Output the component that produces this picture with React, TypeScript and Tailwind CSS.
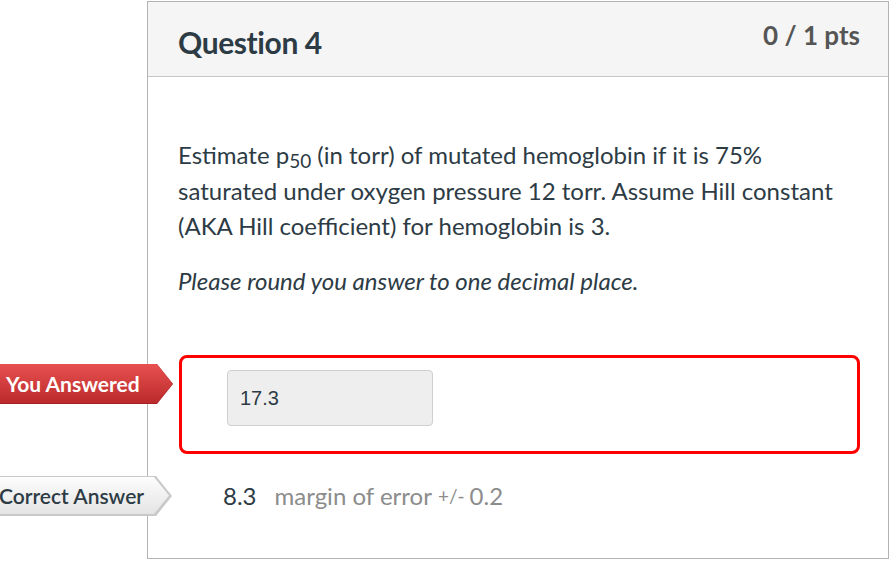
import React from "react"

const font = "font-['Lato','Noto_Sans',sans-serif]"

function AnswerFlag({ label, tone }: { label: string; tone: "wrong" | "right" }) {
  const shape = "[clip-path:polygon(0_0,157px_0,173px_50%,157px_100%,0_100%)]"
  if (tone === "wrong") {
    return (
      <div className={`relative h-10 w-[173px] ${shape} bg-[#a82026]`}>
        <div
          className={`absolute inset-x-0 top-0 bottom-px ${shape} bg-gradient-to-b from-[#e8504f] to-[#bb2a2c] flex items-center pl-[6px] text-[21px] font-bold text-white`}
        >
          {label}
        </div>
      </div>
    )
  }
  return (
    <div className={`relative h-10 w-[173px] ${shape} bg-[#c9c9c9]`}>
      <div
        className={`absolute left-0 right-[2px] top-px bottom-[2px] [clip-path:polygon(0_0,155px_0,170px_50%,155px_100%,0_100%)] bg-gradient-to-b from-[#fdfdfd] to-[#e4e4e4] flex items-center pl-0 text-[21px] font-semibold text-[#2d3b45]`}
      >
        {label}
      </div>
    </div>
  )
}

export default function App() {
  return (
    <div className={`w-[893px] h-[566px] bg-white overflow-hidden ${font}`}>
      <div className="relative ml-[147px] mt-px w-[742px] h-[558px] border border-[#b4b4b4] bg-white">
        {/* Header */}
        <div className="h-[75px] bg-[#f5f5f5] border-b border-[#c7c7c7] flex items-start justify-between pl-[30px] pr-[28px]">
          <h2 className="mt-[20px] text-[30px] leading-[40px] font-bold text-[#2d3b45] tracking-[-0.4px]">Question 4</h2>
          <div className="mt-[17px] text-[26px] leading-[32px] font-bold text-[#555]">0 / 1 pts</div>
        </div>

        {/* Question text */}
        <div className="pl-[30px] pr-[50px] pt-[60px] text-[24px] leading-[35.5px] text-[#2d3b45]">
          <p>
            Estimate p<span className="text-[19px] leading-none align-[-4px]">50</span> (in torr) of mutated
            hemoglobin if it is 75% saturated under oxygen pressure 12 torr. Assume Hill constant (AKA Hill
            coefficient) for hemoglobin is 3.
          </p>
          <p className="mt-[19px] italic">Please round you answer to one decimal place.</p>
        </div>

        {/* You answered */}
        <div className="relative mt-[57px] ml-[31px] mr-[28px] h-[99px] rounded-[8px] border-[3px] border-[#ff0000] pl-[45px] pt-[12px]">
          <div className="w-[206px] h-[56px] rounded-[4px] border border-[#cfcfcf] bg-[#eeeeee] flex items-center pl-[12px] text-[20px] text-[#2d3b45] font-['Liberation_Sans',Arial,sans-serif]">
            17.3
          </div>
          <div className="absolute left-[-182px] top-[6px]">
            <AnswerFlag label="You Answered" tone="wrong" />
          </div>
        </div>

        {/* Correct answer */}
        <div className="relative mt-[22px] ml-[75px] h-[40px] flex items-center text-[24px]">
          <span className="text-[#2d3b45]">8.3</span>
          <span className="ml-[18px] text-[#8c8c8c]">margin of error</span>
          <span className="ml-[6px] text-[19px] text-[#8c8c8c]">+/-</span>
          <span className="ml-[5px] text-[#8c8c8c]">0.2</span>
          <div className="absolute left-[-224px] top-0">
            <AnswerFlag label="Correct Answer" tone="right" />
          </div>
        </div>
      </div>
    </div>
  )
}
